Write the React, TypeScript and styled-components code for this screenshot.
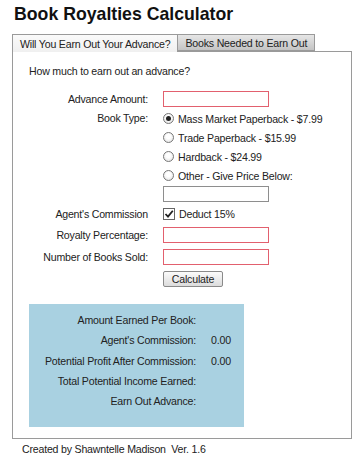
import React from 'react'
import styled, { createGlobalStyle } from 'styled-components'

const GlobalStyle = createGlobalStyle`
  html, body {
    margin:0;
    padding:0;
    background:#fff;
  }
  body {
    font-family:"Liberation Sans", Arial, sans-serif;
    font-size:10.6px;
    letter-spacing:-0.2px;
    color:#222;
  }
`

const Page = styled.div`
  width:358px;
  padding:0 6px 0 12px;
  box-sizing:border-box;
`
const Title = styled.h1`
  margin:0;
  padding:4px 0 0 2px;
  height:30px;
  box-sizing:border-box;
  font-size:17.7px;
  line-height:20px;
  letter-spacing:0;
  font-weight:bold;
  color:#111;
`
const TabBar = styled.div`
  display:flex;
  height:17px;
  margin-top:4px;
  position:relative;
  z-index:1;
`
const Tab = styled.div<{ $active?: boolean }>`
  display:flex;
  align-items:center;
  padding:0 7px;
  box-sizing:border-box;
  height:${p => (p.$active ? '18px' : '17px')};
  border:1px solid #9a9a9a;
  border-bottom:${p => (p.$active ? 'none' : '1px solid #9a9a9a')};
  border-left:${p => (p.$active ? '1px solid #9a9a9a' : 'none')};
  background:${p => (p.$active ? 'linear-gradient(#fafafa,#f0f0f0)' : 'linear-gradient(#e6e6e6,#c4c4c4)')};
  color:#222;
  white-space:nowrap;
`
const Panel = styled.div`
  border:1px solid #9a9a9a;
  width:340px;
  box-sizing:border-box;
  padding:12px 0 11px 16px;
`
const Intro = styled.div`
  line-height:14px;
  margin-bottom:13px;
`
const Form = styled.div`
  display:grid;
  grid-template-columns:119px auto;
  column-gap:15px;
  align-items:start;
`
const Label = styled.div<{ $top?: number; $h?: number }>`
  text-align:right;
  margin-top:${p => p.$top ?? 0}px;
  height:${p => p.$h ?? 16}px;
  line-height:${p => p.$h ?? 16}px;
  white-space:nowrap;
`
const Field = styled.div<{ $top?: number }>`
  margin-top:${p => p.$top ?? 0}px;
`
const TextInput = styled.input<{ $required?: boolean }>`
  display:block;
  width:106px;
  height:16px;
  box-sizing:border-box;
  border:1px solid ${p => (p.$required ? '#e2606e' : '#8e8e8e')};
  padding:0 2px;
  margin:0;
  font:10.6px "Liberation Sans", Arial, sans-serif;
  background:#fff;
  outline:none;
`
const RadioRow = styled.label`
  display:flex;
  align-items:center;
  height:19px;
  white-space:nowrap;
`
const RadioDot = styled.span<{ $on?: boolean }>`
  width:11px;
  height:11px;
  border-radius:50%;
  box-sizing:border-box;
  border:1px solid #777;
  background:radial-gradient(circle at 50% 40%, #fff 30%, #dcdcdc 100%);
  margin-right:4px;
  display:flex;
  align-items:center;
  justify-content:center;
  &::after {
    content:'';
    display:${p => (p.$on ? 'block' : 'none')};
    width:5px;
    height:5px;
    border-radius:50%;
    background:#222;
  }
`
const CheckRow = styled.div`
  display:flex;
  align-items:center;
  height:18px;
  white-space:nowrap;
`
const CheckBox = styled.span`
  width:12px;
  height:12px;
  box-sizing:border-box;
  border:1px solid #666;
  background:#fff;
  margin-right:4px;
  display:flex;
  align-items:center;
  justify-content:center;
`
const Button = styled.button`
  display:block;
  height:16px;
  width:60px;
  padding:0;
  box-sizing:border-box;
  border:1px solid #8a8a8a;
  border-radius:2px;
  background:linear-gradient(#fbfbfb,#dcdcdc);
  font:10.6px "Liberation Sans", Arial, sans-serif;
  letter-spacing:-0.2px;
  color:#222;
`
const Results = styled.div`
  margin-top:17px;
  width:215px;
  height:123px;
  box-sizing:border-box;
  background:#a9d1e1;
  padding:6px 0 0 0;
  display:grid;
  grid-template-columns:167px auto;
  column-gap:15px;
  grid-auto-rows:20.3px;
  align-items:center;
`
const ResultLabel = styled.div`
  text-align:right;
  white-space:nowrap;
`
const ResultValue = styled.div``
const Footer = styled.div`
  padding:3px 0 0 10px;
  line-height:14px;
`

const radios = [
  'Mass Market Paperback - $7.99',
  'Trade Paperback - $15.99',
  'Hardback - $24.99',
  'Other - Give Price Below:',
]

const results: [string, string][] = [
  ['Amount Earned Per Book:', ''],
  ["Agent's Commission:", '0.00'],
  ['Potential Profit After Commission:', '0.00'],
  ['Total Potential Income Earned:', ''],
  ['Earn Out Advance:', ''],
]

export default function App() {
  return (
    <Page>
      <GlobalStyle />
      <Title>Book Royalties Calculator</Title>
      <TabBar>
        <Tab $active>Will You Earn Out Your Advance?</Tab>
        <Tab>Books Needed to Earn Out</Tab>
      </TabBar>
      <Panel>
        <Intro>How much to earn out an advance?</Intro>
        <Form>
          <Label>Advance Amount:</Label>
          <Field><TextInput $required /></Field>

          <Label $top={2} $h={19}>Book Type:</Label>
          <Field $top={2}>
            {radios.map((r, i) => (
              <RadioRow key={r}>
                <RadioDot $on={i === 0} />
                {r}
              </RadioRow>
            ))}
            <TextInput style={{ marginTop: 1 }} />
          </Field>

          <Label $top={3} $h={18}>Agent's Commission</Label>
          <Field $top={3}>
            <CheckRow>
              <CheckBox>
                <svg width="10" height="10" viewBox="0 0 10 10">
                  <path d="M1.5 5 L4 7.6 L8.8 1.8" fill="none" stroke="#222" strokeWidth="1.8" />
                </svg>
              </CheckBox>
              Deduct 15%
            </CheckRow>
          </Field>

          <Label $top={4}>Royalty Percentage:</Label>
          <Field $top={4}><TextInput $required /></Field>

          <Label $top={6}>Number of Books Sold:</Label>
          <Field $top={6}><TextInput $required /></Field>

          <div />
          <Field $top={6}><Button>Calculate</Button></Field>
        </Form>
        <Results>
          {results.map(([l, v]) => (
            <React.Fragment key={l}>
              <ResultLabel>{l}</ResultLabel>
              <ResultValue>{v}</ResultValue>
            </React.Fragment>
          ))}
        </Results>
      </Panel>
      <Footer>Created by Shawntelle Madison&nbsp; Ver. 1.6</Footer>
    </Page>
  )
}
